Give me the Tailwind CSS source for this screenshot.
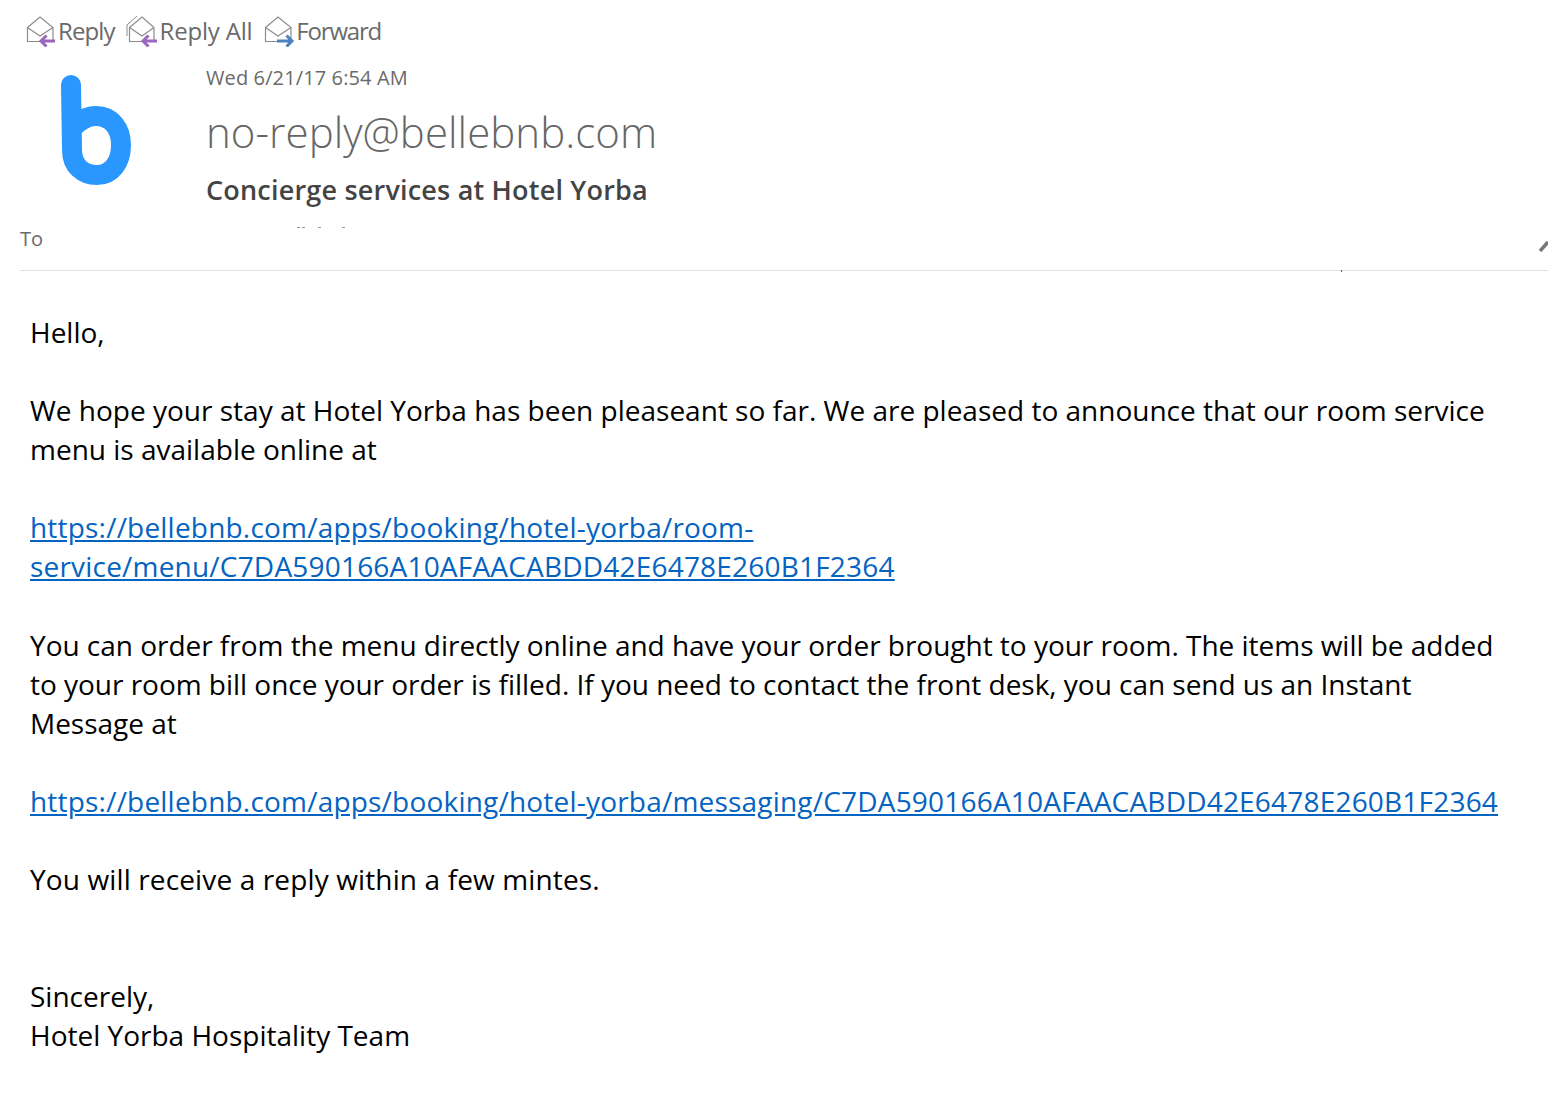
<!DOCTYPE html>
<html lang="en">
<head>
<meta charset="UTF-8">
<title>Concierge services at Hotel Yorba</title>
<script src="https://cdn.jsdelivr.net/npm/@tailwindcss/browser@4"></script>
</head>
<body class="bg-white font-['Open_Sans','Noto_Sans',sans-serif] overflow-hidden">
    <!-- toolbar -->
    <div class="flex items-center h-[62px] pl-[26px] text-[24px] text-[#6a6a6a]">
        <div class="flex items-center">
            <svg class="w-[32px] h-[32px]" viewBox="0 0 32 32" fill="none">
                <path d="M1.500 12.500 14 2l13 10.500v14H1.500z M1.500 12.500 14 21l13-8.500" stroke="#8c8c8c" stroke-width="1.200"/>
                <path d="M29 26H15 M20.500 20.500 15 26l5.500 5.500" stroke="#9a67bd" stroke-width="3"/>
            </svg>
            <span class="tracking-[-0.9px]">Reply</span>
        </div>
        <div class="flex items-center ml-[10px]">
            <svg class="w-[35px] h-[32px]" viewBox="0 0 35 32" fill="none">
                <path d="M2 21V10L12 1" stroke="#8c8c8c" stroke-width="1"/>
                <path d="M4.500 12.500 17 2l12 10.500v14h-24.500z M4.500 12.500 17 21l12-8.500" stroke="#8c8c8c" stroke-width="1.200"/>
                <path d="M32 26H18 M23.500 20.500 18 26l5.500 5.500" stroke="#9a67bd" stroke-width="3"/>
            </svg>
            <span class="tracking-[-0.2px]">Reply All</span>
        </div>
        <div class="flex items-center ml-[12px]">
            <svg class="w-[32px] h-[32px]" viewBox="0 0 32 32" fill="none">
                <path d="M1.500 12.500 14 2l13 10.500v14H1.500z M1.500 12.500 14 21l13-8.500" stroke="#8c8c8c" stroke-width="1.200"/>
                <path d="M13 26h15 M22.500 20.500 28 26l-5.500 5.500" stroke="#4a82bd" stroke-width="3"/>
            </svg>
            <span class="tracking-[-1.200px]">Forward</span>
        </div>
    </div>

    <!-- message header -->
    <div class="flex h-[161px]">
        <div class="w-[206px] shrink-0 pl-[60px] pt-[12px]">
            <svg class="w-[74px] h-[114px]" viewBox="0 0 74 114" fill="none">
                <path d="M11 11 L12 76 C12 92 23 101 37 101 C52 101 61 88 61 71 C61 54 51 42 36 42 C26 42 19 47 13 54" stroke="#2a97ff" stroke-width="20" stroke-linecap="round" stroke-linejoin="round"/>
            </svg>
        </div>
        <div>
            <div class="text-[20px] leading-[32px] tracking-[0.12px] text-[#6a6a6a]">Wed 6/21/17 6:54 AM</div>
            <div class="text-[42px] leading-[58px] mt-[9px] font-light tracking-[0.06px] text-[#666666]">no-reply@bellebnb.com</div>
            <div class="text-[27px] leading-[38px] mt-[10px] font-semibold tracking-[0.2px] text-[#444444]">Concierge services at Hotel Yorba</div>
        </div>
    </div>
    <div class="relative flex justify-between items-center h-[48px] ml-[20px] border-b border-[#e1e1e1] text-[20px] text-[#6a6a6a]">
        <span class="-mt-[16px]">To</span>
        <!-- bottoms of the clipped recipient line -->
        <div class="absolute left-[277px] top-[4px] w-[3px] h-[1px] bg-[#9a9a9a]"></div>
        <div class="absolute left-[282px] top-[4px] w-[3px] h-[1px] bg-[#9a9a9a]"></div>
        <div class="absolute left-[298px] top-[4px] w-[3px] h-[1px] bg-[#9a9a9a]"></div>
        <div class="absolute left-[322px] top-[4px] w-[3px] h-[1px] bg-[#9a9a9a]"></div>
        <div class="absolute left-[1321px] top-[47px] w-[1px] h-[2px] bg-[#44617a]"></div>
        <svg class="w-[9px] h-[12px] mt-[-2px]" viewBox="0 0 9 12"><path d="M1 11 9 2" stroke="#777777" stroke-width="3.500"/></svg>
    </div>

    <!-- message body -->
    <div class="pl-[30px] pt-[42px] text-[28px] leading-[39.050px] text-black whitespace-nowrap">
        <p>Hello,</p>
        <p class="mt-[39.050px]">We hope your stay at Hotel Yorba has been pleaseant so far. We are pleased to announce that our room service<br>menu is available online at</p>
        <p class="mt-[39.050px]"><a href="#" class="text-[#0563c1] underline tracking-[0.2px]">https://bellebnb.com/apps/booking/hotel-yorba/room-<br>service/menu/C7DA590166A10AFAACABDD42E6478E260B1F2364</a></p>
        <p class="mt-[39.800px] tracking-[-0.025px]">You can order from the menu directly online and have your order brought to your room. The items will be added<br>to your room bill once your order is filled. If you need to contact the front desk, you can send us an Instant<br>Message at</p>
        <p class="mt-[38.300px]"><a href="#" class="text-[#0563c1] underline tracking-[0.2px]">https://bellebnb.com/apps/booking/hotel-yorba/messaging/C7DA590166A10AFAACABDD42E6478E260B1F2364</a></p>
        <p class="mt-[39.050px] tracking-[0.13px]">You will receive a reply within a few mintes.</p>
        <p class="mt-[78.100px]">Sincerely,<br>Hotel Yorba Hospitality Team</p>
    </div>
</body>
</html>
